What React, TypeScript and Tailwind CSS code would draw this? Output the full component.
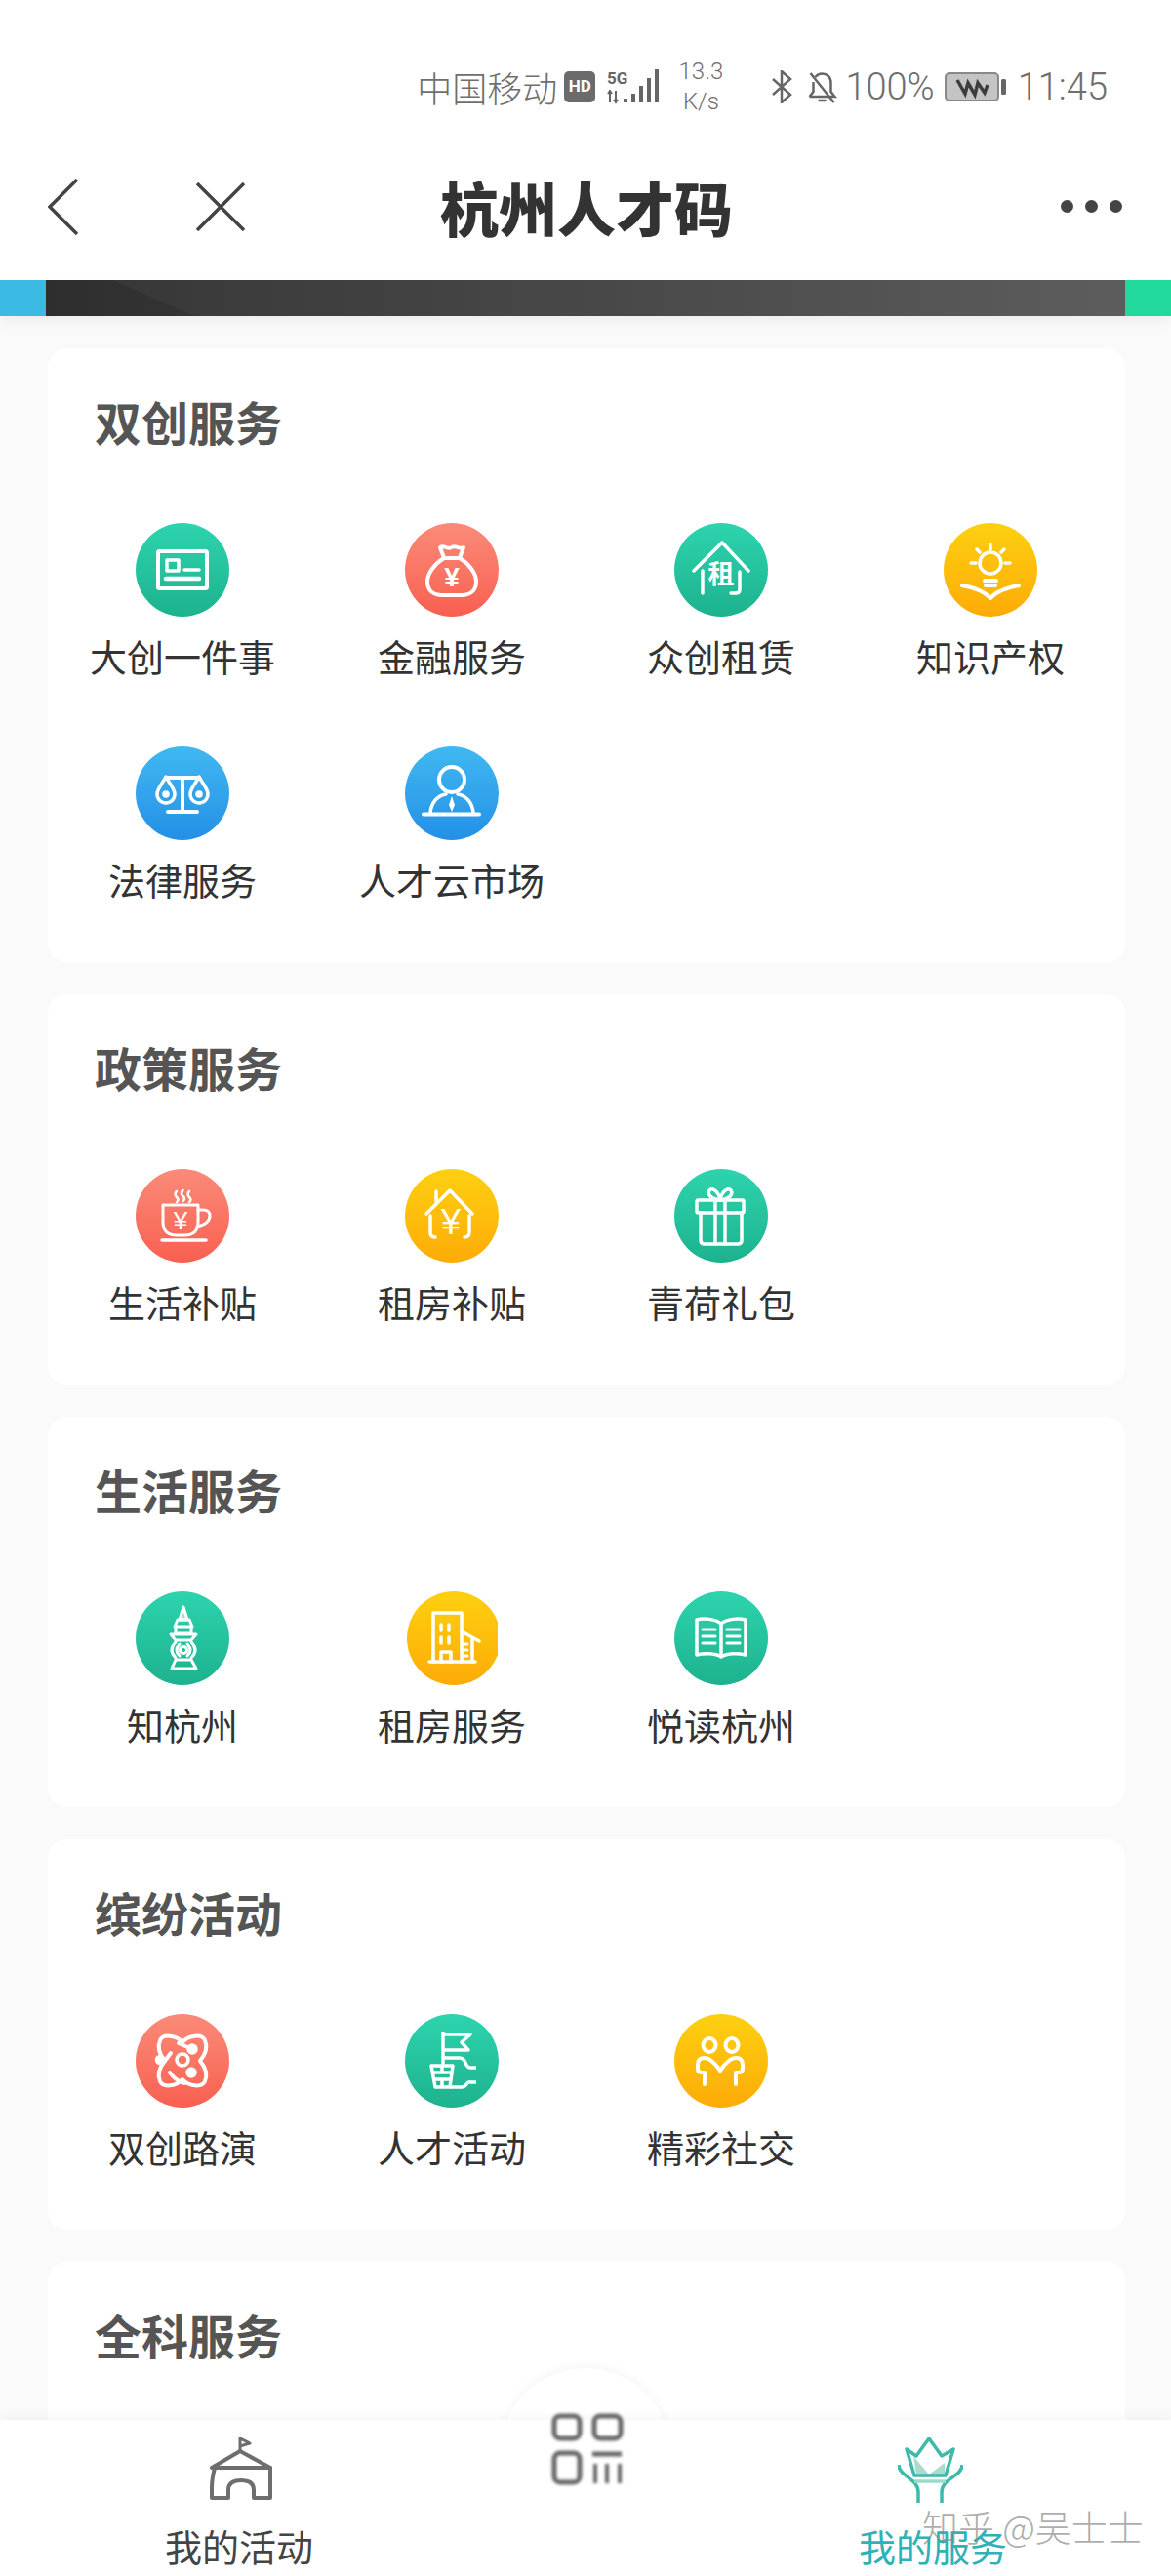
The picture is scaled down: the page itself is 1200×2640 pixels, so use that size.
import type { ReactNode } from 'react';

const green = 'bg-gradient-to-b from-[#2dd4ae] to-[#1db28e]';
const red = 'bg-gradient-to-b from-[#fb8a78] to-[#f85f50]';
const yellow = 'bg-gradient-to-b from-[#fdd010] to-[#fdab07]';
const blue = 'bg-gradient-to-b from-[#41b8f1] to-[#2490e6]';

function Glyph({ children }: { children: ReactNode }) {
  return (
    <svg viewBox="0 0 96 96" className="h-[96px] w-[96px]" fill="none" stroke="#fff" strokeWidth="3.5" strokeLinecap="round" strokeLinejoin="round">
      {children}
    </svg>
  );
}

function Yen({ x, y, size, weight = 700 }: { x: number; y: number; size: number; weight?: number }) {
  return (
    <text x={x} y={y} fontSize={size} fontWeight={weight} textAnchor="middle" fill="#fff" stroke="none" fontFamily="'Liberation Sans', sans-serif">
      ¥
    </text>
  );
}

const icons: Record<string, ReactNode> = {
  card: (
    <>
      <rect x="23" y="29" width="50" height="38" rx="1.5" strokeWidth="4" />
      <rect x="32" y="38" width="12" height="11" strokeWidth="3.5" />
      <path d="M50 48H65" strokeWidth="3.5" />
      <path d="M31 57H65" strokeWidth="4.5" />
    </>
  ),
  bag: (
    <>
      <path d="M36 25C40 22 44 28 48 25C52 22 56 28 60 25L56 36H40Z" strokeWidth="4" />
      <path d="M40 36C30 42 23 52 23 60C23 70 30 74 38 74H58C66 74 73 70 73 60C73 52 66 42 56 36" strokeWidth="4" />
      <Yen x={48} y={65} size={28} />
    </>
  ),
  rent: (
    <>
      <path d="M20 49L49 20L76 49" />
      <path d="M29 49V72" />
      <path d="M67 50V68Q67 72 63 72H58" />
      <text x="48" y="62" fontSize="27" fontWeight="700" textAnchor="middle" fill="#fff" stroke="none" fontFamily="'Noto Sans CJK SC', sans-serif">
        租
      </text>
    </>
  ),
  bulb: (
    <>
      <circle cx="48" cy="41" r="11" />
      <path d="M48 22V27M34 27L37 30M62 27L59 30M28 41H33M63 41H68" />
      <path d="M42 59H54M43 64H53" strokeWidth="4" />
      <path d="M19 64C30 66 41 69 48 77C55 69 66 66 77 64" strokeWidth="4" />
    </>
  ),
  scale: (
    <>
      <path d="M33 32H63M48 32V67M33 67H63" strokeWidth="4" />
      <path d="M31 31C27 39 22 43 22 49A9 9 0 0 0 40 49C40 43 35 39 31 31Z" />
      <path d="M65 31C61 39 56 43 56 49A9 9 0 0 0 74 49C74 43 69 39 65 31Z" />
      <circle cx="31" cy="49" r="2" fill="#fff" />
      <circle cx="65" cy="49" r="2" fill="#fff" />
    </>
  ),
  person: (
    <>
      <circle cx="48" cy="34" r="13" strokeWidth="4" />
      <path d="M26 68C27 57 34 50 42 49M70 68C69 57 62 50 54 49" />
      <path d="M19 69.500H76" strokeWidth="4" />
      <path d="M48 51L51 60L48 67L45 60Z" fill="#fff" stroke="none" />
    </>
  ),
  coffee: (
    <>
      <path d="M42 23Q39 26 42 29T42 34M48.500 22Q45.500 25 48.500 28T48.500 33M55 23Q52 26 55 29T55 34" strokeWidth="2.500" />
      <path d="M28 37H64V54Q64 68 50 68H42Q28 68 28 54Z" strokeWidth="3" />
      <path d="M64 42H69Q76 42 76 48Q76 56 63 59" strokeWidth="3" />
      <path d="M27 73H72" />
      <Yen x={46} y={62} size={26} weight={400} />
    </>
  ),
  home: (
    <>
      <path d="M22 46L46 22L69 46" />
      <path d="M32 34V23" />
      <path d="M26 48V65Q26 70 31 70M66 48V65Q66 70 61 70" />
      <Yen x={47} y={67} size={36} weight={400} />
    </>
  ),
  gift: (
    <>
      <rect x="23" y="32" width="48" height="13" rx="1.500" />
      <path d="M27 45V73Q27 77 31 77H65Q69 77 69 73V45" />
      <path d="M42 32V77M52 32V77" />
      <path d="M47 32C38 31 33 26 36 22C39 18 46 24 47 32C48 24 55 18 58 22C61 26 56 31 47 32Z" />
    </>
  ),
  tower: (
    <g strokeWidth="3">
      <path d="M49 16L45 29H53Z" fill="#fff" fillOpacity="0.5" />
      <path d="M43 29H55L58 36H40Z" />
      <path d="M41 37V43H57V37" />
      <path d="M36 44H62L57 50H41Z" />
      <circle cx="49" cy="60" r="3.500" />
      <path d="M41 52Q33 60 41 68M57 52Q65 60 57 68M45 54Q39 60 45 66M53 54Q59 60 53 66" />
      <path d="M37 79H62L57 70H41Z" />
    </g>
  ),
  building: (
    <>
      <path d="M23 72H70" />
      <path d="M27 72V22H56V72" />
      <path d="M35 34V40M43 34V40M35 47V53M43 47V53" />
      <path d="M35 72V62H45V72" />
      <path d="M56 41L74 51M67 48V72" />
      <path d="M57 54H62M57 60H62M57 66H62" strokeWidth="3" />
    </>
  ),
  book: (
    <>
      <path d="M48 33C42 28 30 27 23 29V65C30 63 42 63 48 67C54 63 66 63 73 65V29C66 27 54 28 48 33V67Z" />
      <path d="M29 39H42M29 46H42M29 53H42M54 39H67M54 46H67M54 53H67" strokeWidth="3" />
    </>
  ),
  atom: (
    <>
      <path d="M48 29C54 22 68 20 71 27C74 34 71 42 66 48C71 54 74 62 71 69C68 76 54 74 48 67C42 74 28 76 25 69C22 62 25 54 30 48C25 42 22 34 25 27C28 20 42 22 48 29Z" strokeWidth="4" />
      <path d="M58 36L44 30M35 60Q40 68 50 71M30 48L36 40" strokeWidth="4" />
      <circle cx="48" cy="47" r="6" strokeWidth="3.500" />
      <circle cx="25" cy="47" r="3.500" fill="#fff" />
      <circle cx="58" cy="36" r="4" fill="#fff" />
      <circle cx="57" cy="60" r="4" fill="#fff" />
    </>
  ),
  flag: (
    <g strokeWidth="3.500" strokeLinecap="butt">
      <path d="M39 18V52" />
      <path d="M39 21H67L58 29L65 37H39" />
      <path d="M39 45H56Q60 45 62 50T67 55H73" />
      <path d="M27 53H49L46 75H31Z" />
      <path d="M28 60H48M29 67H47M38 53V60M38 67V75" />
      <path d="M46 75H58Q61 75 63 72T68 70H73" />
    </g>
  ),
  people: (
    <>
      <ellipse cx="36" cy="32" rx="6.500" ry="7" strokeWidth="4" />
      <ellipse cx="59" cy="32" rx="6.500" ry="7" strokeWidth="4" />
      <path d="M31 72V60H28Q24 60 24 56V52Q24 45 31 45Q38 45 47 58Q56 45 63 45Q70 45 70 52V56Q70 60 66 60H63V72" strokeWidth="4" />
    </>
  ),
};

const sections = [
  {
    title: '双创服务',
    items: [
      { label: '大创一件事', icon: 'card', tone: green },
      { label: '金融服务', icon: 'bag', tone: red },
      { label: '众创租赁', icon: 'rent', tone: green },
      { label: '知识产权', icon: 'bulb', tone: yellow },
      { label: '法律服务', icon: 'scale', tone: blue },
      { label: '人才云市场', icon: 'person', tone: blue },
    ],
  },
  {
    title: '政策服务',
    items: [
      { label: '生活补贴', icon: 'coffee', tone: red },
      { label: '租房补贴', icon: 'home', tone: yellow },
      { label: '青荷礼包', icon: 'gift', tone: green },
    ],
  },
  {
    title: '生活服务',
    items: [
      { label: '知杭州', icon: 'tower', tone: green },
      { label: '租房服务', icon: 'building', tone: yellow, nudge: 'translate-x-[2px] [clip-path:inset(0_3px_0_0)]' },
      { label: '悦读杭州', icon: 'book', tone: green },
    ],
  },
  {
    title: '缤纷活动',
    items: [
      { label: '双创路演', icon: 'atom', tone: red },
      { label: '人才活动', icon: 'flag', tone: green },
      { label: '精彩社交', icon: 'people', tone: yellow },
    ],
  },
];

function StatusBar() {
  return (
    <div className="flex h-[144px] items-center justify-end pr-[65px] pt-[34px] text-[#6e6e6e] font-['Roboto','Noto_Sans_CJK_SC',sans-serif]">
      <span className="text-[36px] leading-[44px] font-['Noto_Sans_CJK_SC',sans-serif] font-light">中国移动</span>
      <span className="ml-[7px] flex h-[32px] w-[32px] items-center justify-center rounded-[5px] bg-[#6b6b6b] text-[17px] font-bold text-white">HD</span>
      <svg viewBox="0 0 56 36" className="ml-[12px] h-[36px] w-[56px]">
        <text x="0" y="15" fontSize="17" fontWeight="700" fill="#666" fontFamily="'Roboto', sans-serif">5G</text>
        <path d="M3 34V22M1 25L3 22L5 25M9 22V34M7 31L9 34L11 31" stroke="#666" strokeWidth="2" fill="none" />
        <path d="M19 34V30M27 34V25M35 34V17M43 34V9M51 34V0" stroke="#666" strokeWidth="4" />
      </svg>
      <div className="ml-[15px] flex w-[50px] flex-col items-center text-[24px] leading-[31px] font-light">
        <span>13.3</span>
        <span>K/s</span>
      </div>
      <svg viewBox="0 0 22 34" className="ml-[46px] h-[34px] w-[24px]" fill="none" stroke="#666" strokeWidth="2.500">
        <path d="M2 9L20 25L11 33V1L20 9L2 25" />
      </svg>
      <svg viewBox="0 0 32 34" className="ml-[13px] h-[34px] w-[33px]" fill="none" stroke="#666" strokeWidth="2.500">
        <path d="M3 27H29L25 22V13C25 7 21 3.500 16 3.500C13 3.500 10.500 5 9 7M7 12V22L3 27" />
        <path d="M12 31H20" />
        <path d="M4 3L28 33" />
      </svg>
      <span className="ml-[7px] text-[38px] leading-[44px] font-light">100%</span>
      <svg viewBox="0 0 64 30" className="ml-[10px] h-[30px] w-[64px]">
        <rect x="1" y="1" width="54" height="28" rx="4" fill="#c4c4c4" stroke="#888" strokeWidth="2" />
        <rect x="58" y="7" width="5" height="16" rx="1.500" fill="#666" />
        <path d="M13 8L21 22L24 11L31 23L34 11L41 21L44 13" fill="none" stroke="#3c3c3c" strokeWidth="3.500" />
      </svg>
      <span className="ml-[11px] text-[38px] leading-[44px] font-light">11:45</span>
    </div>
  );
}

function NavBar() {
  return (
    <div className="relative flex h-[143px] items-center justify-between pb-[8px] pl-[49px] pr-[50px]">
      <div className="flex items-center gap-[120px]">
        <svg viewBox="0 0 32 58" className="h-[58px] w-[32px]" fill="none" stroke="#444" strokeWidth="3.500">
          <path d="M30 1L2 29L30 57" />
        </svg>
        <svg viewBox="0 0 50 50" className="h-[50px] w-[50px]" fill="none" stroke="#444" strokeWidth="3.500">
          <path d="M1 1L49 49M49 1L1 49" />
        </svg>
      </div>
      <h1 className="absolute left-[451px] text-[60px] leading-[72px] font-black text-[#333]">杭州人才码</h1>
      <div className="flex gap-[12px]">
        <span className="h-[13px] w-[13px] rounded-full bg-[#444]" />
        <span className="h-[13px] w-[13px] rounded-full bg-[#444]" />
        <span className="h-[13px] w-[13px] rounded-full bg-[#444]" />
      </div>
    </div>
  );
}

function Banner() {
  return (
    <div className="flex h-[37px] shadow-[0_6px_14px_rgba(0,0,0,0.05)]">
      <div className="w-[47px] bg-[#3bbae3]" />
      <div className="relative flex-1 bg-gradient-to-r from-[#2e2e2e] to-[#585858]">
        <svg viewBox="0 0 1106 37" className="absolute inset-0 h-full w-full" preserveAspectRatio="none">
          <path d="M68 0H370L450 37H152Z" fill="#fff" fillOpacity="0.035" />
          <path d="M370 0H1106V37H450Z" fill="#fff" fillOpacity="0.03" />
        </svg>
      </div>
      <div className="w-[47px] bg-[#21d99c]" />
    </div>
  );
}

function Section({ title, items }: (typeof sections)[number]) {
  return (
    <section className="rounded-[20px] bg-white pb-[63px] pt-[46px]">
      <h2 className="ml-[48px] h-[56px] text-[48px] leading-[56px] font-bold text-[#555]">{title}</h2>
      <div className="mt-[77px] grid grid-cols-4 gap-y-[71px]">
        {items.map((item) => (
          <div key={item.label} className="flex flex-col items-center">
            <div className={`h-[96px] w-[96px] rounded-full ${item.tone} ${'nudge' in item ? item.nudge : ''}`}>
              <Glyph>{icons[item.icon]}</Glyph>
            </div>
            <span className="mt-[18px] text-[38px] leading-[44px] text-[#333]">{item.label}</span>
          </div>
        ))}
      </div>
    </section>
  );
}

function TabBar() {
  return (
    <div className="absolute inset-x-0 bottom-0 h-[160px]">
      <div className="absolute left-[512px] top-[-53px] h-[176px] w-[176px] rounded-full bg-white shadow-[0_-3px_10px_rgba(0,0,0,0.04)]" />
      <div className="relative flex h-full justify-between bg-white pl-[169px] pr-[168px] pt-[18px] shadow-[0_-3px_10px_rgba(0,0,0,0.04)]">
        <div className="flex w-[152px] flex-col items-center">
          <svg viewBox="0 0 66 64" className="ml-[4px] h-[64px] w-[66px]" fill="none" stroke="#6e6e6e" strokeWidth="4" strokeLinejoin="round" strokeLinecap="round">
            <path d="M32 14V1L42 6L32 9" strokeWidth="3" />
            <path d="M3 31L32 14L63 31H3" />
            <path d="M6 31Q3 42 3 52V62H20V54Q20 44 33 44Q46 44 46 54V62H63V31" />
          </svg>
          <span className="mt-[25px] text-[38px] leading-[44px] text-[#444]">我的活动</span>
        </div>
        <div className="flex w-[152px] flex-col items-center">
          <svg viewBox="0 0 67 67" className="ml-[-5px] h-[67px] w-[67px]" fill="none" stroke="#3fb9ab" strokeWidth="3.500" strokeLinejoin="round">
            <path d="M16 19L32 38L48 26V38H19Z" fill="#a9dccd" stroke="none" />
            <path d="M9 12L19 19L32 1L45 19L57 12L49 39H17Z" />
            <path d="M1 28C1 40 21 42 21 56V67M66 28C66 40 45 42 45 56V67" />
            <path d="M17 45H49" stroke="#9adcc9" />
          </svg>
          <span className="mt-[22px] text-[38px] leading-[44px] text-[#2fb2b4]">我的服务</span>
        </div>
      </div>
      <svg viewBox="0 0 74 74" className="absolute left-[565px] top-[-7px] h-[74px] w-[74px] blur-[1.5px]" fill="none" stroke="#666" strokeWidth="5">
        <rect x="3" y="3" width="26" height="23" rx="6" />
        <rect x="44" y="3" width="27" height="23" rx="6" />
        <rect x="3" y="41" width="26" height="30" rx="6" />
        <path d="M42 42H72" />
        <path d="M45 52V72M57 52V72M70 52V72" strokeWidth="4" />
      </svg>
      <span className="absolute left-[945px] top-[87px] text-[37px] leading-[44px] text-[#888]/70 font-light">知乎 @吴士士</span>
    </div>
  );
}

export default function App() {
  return (
    <div className="relative h-[2640px] w-[1200px] overflow-hidden bg-[#fafafa] font-['Noto_Sans_CJK_SC',sans-serif]">
      <header className="bg-white">
        <StatusBar />
        <NavBar />
      </header>
      <Banner />
      <main className="flex flex-col gap-[33px] pl-[49px] pr-[47px] pt-[33px]">
        {sections.map((section) => (
          <Section key={section.title} {...section} />
        ))}
        <section className="h-[200px] rounded-[20px] bg-white pt-[46px]">
          <h2 className="ml-[48px] h-[56px] text-[48px] leading-[56px] font-bold text-[#555]">全科服务</h2>
        </section>
      </main>
      <TabBar />
    </div>
  );
}
